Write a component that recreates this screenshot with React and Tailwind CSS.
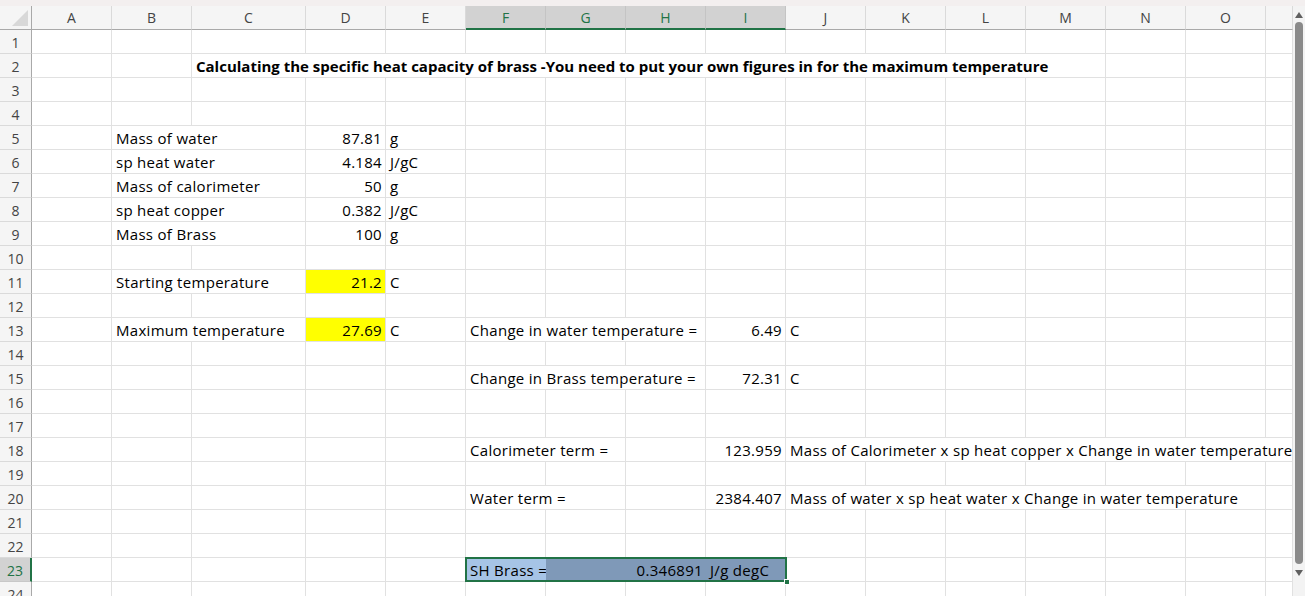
import React from 'react';

const COLS = ['A', 'B', 'C', 'D', 'E', 'F', 'G', 'H', 'I', 'J', 'K', 'L', 'M', 'N', 'O', 'P'];
const SELECTED_COLS = ['F', 'G', 'H', 'I'];
const ROW_COUNT = 24;

const spanCls = {
  1: '',
  2: 'col-span-2',
  3: 'col-span-3',
  6: 'col-span-6',
  7: 'col-span-7',
  11: 'col-span-11',
};

const title =
  'Calculating the specific heat capacity of brass -You need to put your own figures in for the maximum temperature';

// sparse sheet: row -> cells, a cell may spill over the empty cells to its right
const sheet = {
  2: [{ col: 'C', span: 11, text: title, bold: true }],
  5: [
    { col: 'B', span: 2, text: 'Mass of water' },
    { col: 'D', text: '87.81', right: true },
    { col: 'E', text: 'g' },
  ],
  6: [
    { col: 'B', span: 2, text: 'sp heat water' },
    { col: 'D', text: '4.184', right: true },
    { col: 'E', text: 'J/gC' },
  ],
  7: [
    { col: 'B', span: 2, text: 'Mass of calorimeter' },
    { col: 'D', text: '50', right: true },
    { col: 'E', text: 'g' },
  ],
  8: [
    { col: 'B', span: 2, text: 'sp heat copper' },
    { col: 'D', text: '0.382', right: true },
    { col: 'E', text: 'J/gC' },
  ],
  9: [
    { col: 'B', span: 2, text: 'Mass of Brass' },
    { col: 'D', text: '100', right: true },
    { col: 'E', text: 'g' },
  ],
  11: [
    { col: 'B', span: 2, text: 'Starting temperature' },
    { col: 'D', text: '21.2', right: true, yellow: true },
    { col: 'E', text: 'C' },
  ],
  13: [
    { col: 'B', span: 2, text: 'Maximum temperature' },
    { col: 'D', text: '27.69', right: true, yellow: true },
    { col: 'E', text: 'C' },
    { col: 'F', span: 3, text: 'Change in water temperature =' },
    { col: 'I', text: '6.49', right: true },
    { col: 'J', text: 'C' },
  ],
  15: [
    { col: 'F', span: 3, text: 'Change in Brass temperature =' },
    { col: 'I', text: '72.31', right: true },
    { col: 'J', text: 'C' },
  ],
  18: [
    { col: 'F', span: 2, text: 'Calorimeter term =' },
    { col: 'I', text: '123.959', right: true },
    { col: 'J', span: 7, text: 'Mass of Calorimeter x sp heat copper x Change in water temperature' },
  ],
  20: [
    { col: 'F', span: 2, text: 'Water term =' },
    { col: 'I', text: '2384.407', right: true },
    { col: 'J', span: 6, text: 'Mass of water x sp heat water x Change in water temperature' },
  ],
};

const cellBase =
  'h-[24px] border-r border-b border-[#e1e1e1] flex items-center pt-[2px] whitespace-nowrap overflow-hidden text-black text-[15px]';

function Cell({ cell }) {
  return (
    <div
      className={[
        cellBase,
        spanCls[cell.span || 1],
        cell.right ? 'justify-end pr-[3px]' : 'pl-[4px]',
        cell.bold ? 'font-bold tracking-normal' : 'tracking-[0.3px]',
        cell.yellow ? 'bg-[#ffff00]' : '',
      ].join(' ')}
    >
      {cell.text}
    </div>
  );
}

function RowHeader({ n, active }) {
  return (
    <div
      className={
        active
          ? 'h-[24px] bg-[#d2d2d2] border-r-2 border-r-[#217346] border-b border-b-[#c8c8c8] flex items-center justify-center pt-[2px] text-[#217346]'
          : 'h-[24px] bg-[#f5f5f5] border-r border-r-[#a9a9a9] border-b border-b-[#dadada] flex items-center justify-center pt-[2px] text-[#444]'
      }
    >
      {n}
    </div>
  );
}

// F23:I23 selection with the result of the calculation
function SelectedRange() {
  const sub = 'w-[80px] bg-[#7f99b8] flex items-center pt-[2px] whitespace-nowrap text-[15px] tracking-[0.3px]';
  return (
    <div className="col-span-4 h-[24px] relative flex border-b border-[#e1e1e1]">
      <div className={sub + ' bg-[#a6c4e6] pl-[4px]'}>SH Brass =</div>
      <div className={sub} />
      <div className={sub + ' justify-end pr-[3px]'}>0.346891</div>
      <div className={sub + ' pl-[4px]'}>J/g degC</div>
      <div className="absolute -left-[1px] -top-[1px] w-[322px] h-[25px] border-2 border-[#217346]" />
      <div className="absolute left-[318px] top-[21px] w-[6px] h-[6px] bg-[#217346] border border-white z-10" />
    </div>
  );
}

function SheetRow({ n }) {
  if (n === 23) {
    return (
      <>
        <RowHeader n={n} active />
        {COLS.slice(0, 5).map((c) => (
          <div key={c} className={cellBase} />
        ))}
        <SelectedRange />
        {COLS.slice(9).map((c) => (
          <div key={c} className={cellBase} />
        ))}
      </>
    );
  }

  const cells = sheet[n] || [];
  const out = [];
  let i = 0;
  while (i < COLS.length) {
    const cell = cells.find((x) => x.col === COLS[i]);
    if (cell) {
      out.push(<Cell key={COLS[i]} cell={cell} />);
      i += cell.span || 1;
    } else {
      out.push(<div key={COLS[i]} className={cellBase} />);
      i += 1;
    }
  }
  return (
    <>
      <RowHeader n={n} />
      {out}
    </>
  );
}

export default function App() {
  const rows = Array.from({ length: ROW_COUNT }, (_, k) => k + 1);

  return (
    <div className="w-[1305px] h-[596px] overflow-hidden bg-white flex flex-col text-[14px] font-['Open_Sans',sans-serif]">
      <div className="h-[6px] bg-[#f3efef] shrink-0" />
      <div className="flex flex-1 min-h-0">
        <div className="w-[1293px] shrink-0 grid grid-cols-[32px_80px_80px_114px_80px_80px_80px_80px_80px_80px_80px_80px_80px_80px_80px_80px_27px] auto-rows-[24px] content-start">
          {/* corner */}
          <div className="h-[24px] bg-[#f5f5f5] border-r border-b border-[#a9a9a9] flex items-end justify-end pr-[3px] pb-[3px]">
            <svg width="16" height="16" viewBox="0 0 16 16">
              <path d="M16 0 L16 16 L0 16 Z" fill="#d8d8d8" />
            </svg>
          </div>
          {COLS.map((c) =>
            SELECTED_COLS.includes(c) ? (
              <div
                key={c}
                className="h-[24px] bg-[#d2d2d2] border-r border-r-[#c4c4c4] border-b-2 border-b-[#217346] flex items-center justify-center text-[#217346]"
              >
                {c}
              </div>
            ) : (
              <div
                key={c}
                className="h-[24px] bg-[#f5f5f5] border-r border-r-[#dadada] border-b border-b-[#a9a9a9] flex items-center justify-center text-[#444]"
              >
                {c === 'P' ? '' : c}
              </div>
            )
          )}
          {rows.map((n) => (
            <SheetRow key={n} n={n} />
          ))}
        </div>

        {/* vertical scrollbar */}
        <div className="w-[12px] shrink-0 bg-[#f3f3f3] flex flex-col items-center pt-[6px]">
          <svg width="8" height="6" viewBox="0 0 8 6">
            <path d="M4 0 L8 6 L0 6 Z" fill="#606060" />
          </svg>
          <div className="w-[8px] h-[542px] mt-[4px] rounded-[4px] bg-[#8a8a8a]" />
          <svg className="mt-[6px]" width="8" height="6" viewBox="0 0 8 6">
            <path d="M0 0 L8 0 L4 6 Z" fill="#606060" />
          </svg>
        </div>
      </div>
    </div>
  );
}
